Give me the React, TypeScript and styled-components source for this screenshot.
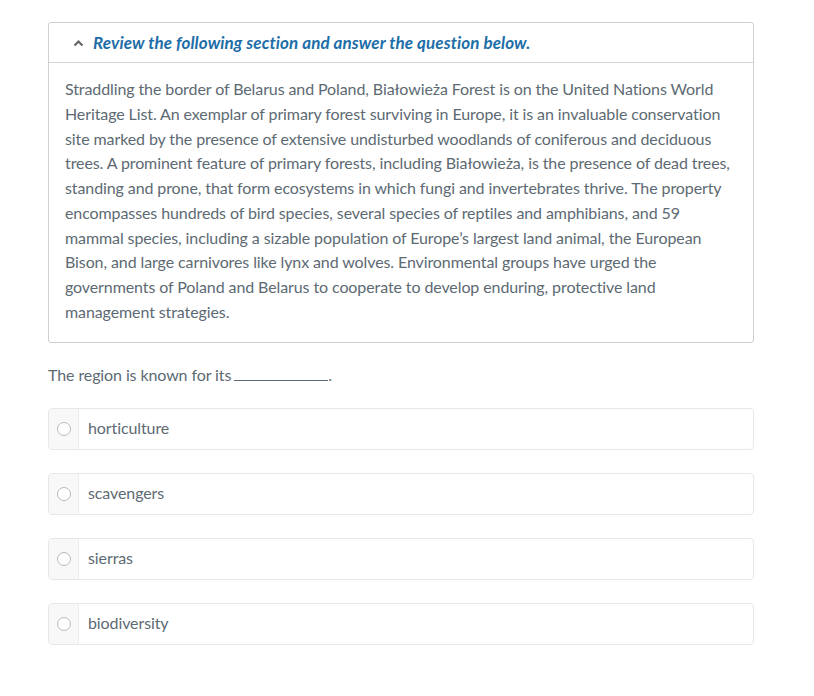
import React from 'react';
import styled, {createGlobalStyle} from 'styled-components';

const GlobalStyle = createGlobalStyle`
  html, body {
    margin: 0;
    padding: 0;
    background: #ffffff;
  }
  body {
    font-family: Lato, "Open Sans", sans-serif;
    color: #5d6a73;
  }
`;

const Page = styled.main`
  width: 706px;
  padding: 22px 0 40px 48px;
`;

const Card = styled.section`
  border: 1px solid #cfcfcf;
  border-radius: 3px;
  background: #fff;
`;

const CardHeader = styled.header`
  height: 39px;
  display: flex;
  align-items: center;
  gap: 9px;
  padding-left: 24px;
  border-bottom: 1px solid #d6d6d6;
`;

const HeaderTitle = styled.h2`
  margin: 0;
  font-size: 17px;
  font-weight: 700;
  font-style: italic;
  letter-spacing: 0.1px;
  color: #1d6ea8;
`;

const Passage = styled.p`
  margin: 0;
  padding: 14px 16px 17px 16px;
  font-size: 16px;
  line-height: 24.75px;
  letter-spacing: -0.1px;
  color: #5d6a73;
`;

const Question = styled.p`
  margin: 20px 0 0;
  font-size: 16px;
  line-height: 24px;
  letter-spacing: -0.1px;
  color: #5d6a73;
`;

const Blank = styled.span`
  display: inline-block;
  width: 94px;
  margin-left: 3px;
  border-bottom: 1px solid #5d6a73;
`;

const Options = styled.ul`
  list-style: none;
  margin: 21px 0 0;
  padding: 0;
  display: flex;
  flex-direction: column;
  gap: 23px;
`;

const Option = styled.li`
  height: 40px;
  display: flex;
  border: 1px solid #e8e8e8;
  border-radius: 4px;
  overflow: hidden;
`;

const RadioCell = styled.div`
  width: 29px;
  flex: none;
  display: flex;
  align-items: center;
  justify-content: center;
  background: #f8f8f8;
  border-right: 1px solid #ececec;
`;

const Radio = styled.span`
  width: 12px;
  height: 12px;
  border-radius: 50%;
  border: 1px solid #b9b9b9;
  background: #fff;
  margin-top: 1px;
`;

const OptionLabel = styled.span`
  display: flex;
  align-items: center;
  padding: 0 0 3px 9px;
  font-size: 16px;
  letter-spacing: -0.1px;
  color: #5d6a73;
`;

const Chevron = () => (
  <svg width="11" height="8" viewBox="0 0 11 8" aria-hidden>
    <path d="M1.5 6.5 5.5 2.5 9.5 6.5" fill="none" stroke="#666" strokeWidth="2.2" />
  </svg>
);

const choices = ['horticulture', 'scavengers', 'sierras', 'biodiversity'];

export default function App() {
  return (
    <>
      <GlobalStyle />
      <Page>
        <Card>
          <CardHeader>
            <Chevron />
            <HeaderTitle>Review the following section and answer the question below.</HeaderTitle>
          </CardHeader>
          <Passage>
            Straddling the border of Belarus and Poland, Białowieża Forest is on the United Nations World
            Heritage List. An exemplar of primary forest surviving in Europe, it is an invaluable conservation
            site marked by the presence of extensive undisturbed woodlands of coniferous and deciduous
            trees. A prominent feature of primary forests, including Białowieża, is the presence of dead trees,
            standing and prone, that form ecosystems in which fungi and invertebrates thrive. The property
            encompasses hundreds of bird species, several species of reptiles and amphibians, and 59
            mammal species, including a sizable population of Europe’s largest land animal, the European
            Bison, and large carnivores like lynx and wolves. Environmental groups have urged the
            governments of Poland and Belarus to cooperate to develop enduring, protective land
            management strategies.
          </Passage>
        </Card>
        <Question>
          The region is known for its<Blank />.
        </Question>
        <Options>
          {choices.map((c) => (
            <Option key={c}>
              <RadioCell>
                <Radio />
              </RadioCell>
              <OptionLabel>{c}</OptionLabel>
            </Option>
          ))}
        </Options>
      </Page>
    </>
  );
}
